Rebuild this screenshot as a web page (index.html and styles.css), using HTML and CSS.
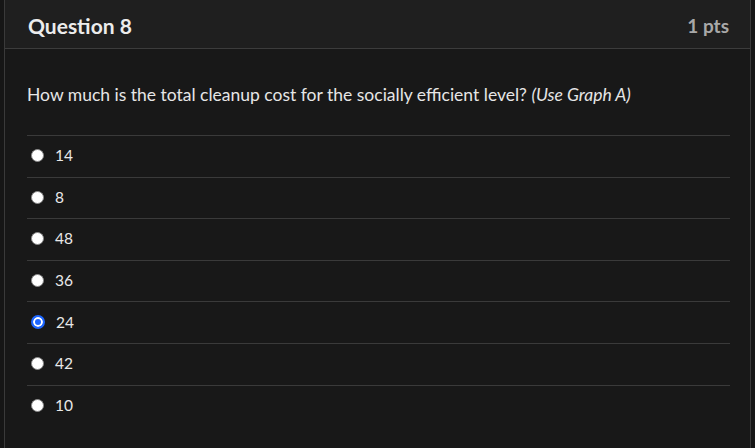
FILE: index.html
```html
<!DOCTYPE html>
<html>
<head>
<meta charset="utf-8">
<link rel="stylesheet" href="styles.css">
</head>
<body>
<div class="question">
  <div class="q-header">
    <h2 class="q-title">Question 8</h2>
    <div class="q-points">1 pts</div>
  </div>
  <div class="q-body">
    <p class="q-text">How much is the total cleanup cost for the socially efficient level? <em>(Use Graph A)</em></p>
    <div class="answers">
      <div class="answer"><span class="radio"></span><span class="label">14</span></div>
      <div class="answer"><span class="radio"></span><span class="label">8</span></div>
      <div class="answer"><span class="radio"></span><span class="label">48</span></div>
      <div class="answer"><span class="radio"></span><span class="label">36</span></div>
      <div class="answer"><span class="radio checked"></span><span class="label">24</span></div>
      <div class="answer"><span class="radio"></span><span class="label">42</span></div>
      <div class="answer"><span class="radio"></span><span class="label">10</span></div>
    </div>
  </div>
</div>
</body>
</html>
```
FILE: styles.css
```css
html, body {
  margin: 0;
  padding: 0;
  background: #161616;
  font-family: Lato, "Liberation Sans", sans-serif;
}
.question {
  margin-left: 4px;
  width: 745px;
  height: 448px;
  border-left: 1px solid #3a3a3a;
  border-right: 1px solid #3a3a3a;
  background: #181818;
}
.q-header {
  height: 49px;
  box-sizing: border-box;
  background: #1f1f1f;
  border-bottom: 1px solid #3c3c3c;
  display: flex;
  align-items: center;
  justify-content: space-between;
  padding: 2px 21px 0 23px;
}
.q-title {
  margin: 0;
  font-size: 21px;
  font-weight: 700;
  color: #ececec;
}
.q-points {
  font-size: 19px;
  font-weight: 700;
  color: #a8a8a8;
}
.q-body {
  padding: 0 20px 0 22px;
}
.q-text {
  margin: 0;
  padding-top: 35px;
  height: 51px;
  font-size: 17.5px;
  color: #e6e6e6;
}
.q-text em {
  font-style: italic;
}
.answer {
  height: 41.6px;
  box-sizing: border-box;
  border-top: 1px solid #3a3a3a;
  display: flex;
  align-items: center;
  padding-left: 4px;
  padding-bottom: 2px;
}
.radio {
  width: 13px;
  height: 13px;
  border-radius: 50%;
  background: #ffffff;
  border: 1px solid #8a8a8a;
  box-sizing: border-box;
  flex: none;
  margin-top: 1px;
}
.radio.checked {
  width: 14px;
  height: 14px;
  background: #1d66ff;
  border: 2px solid #1d66ff;
  box-shadow: inset 0 0 0 2px #ffffff;
}
.label {
  margin-left: 11px;
  font-size: 15.5px;
  color: #e8e8e8;
}
```
